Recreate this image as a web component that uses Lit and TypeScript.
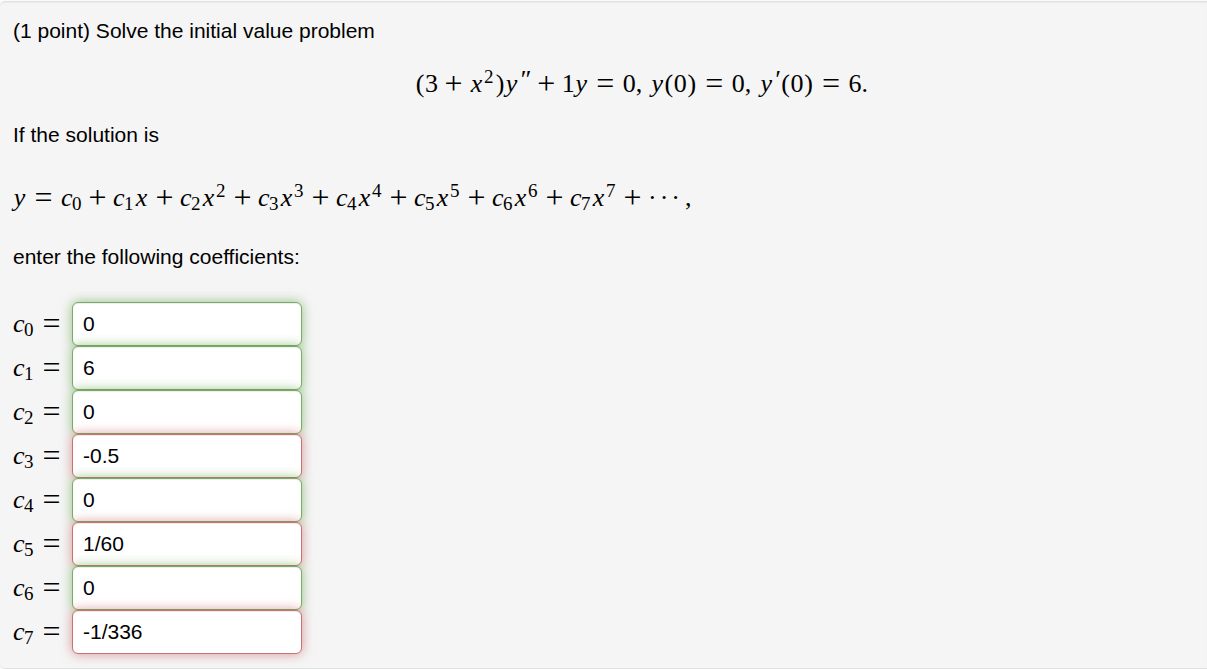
import { LitElement, html, css, nothing } from "lit";
import { customElement } from "lit/decorators.js";

interface Answer {
  index: number;
  value: string;
  correct: boolean;
}

const ANSWERS: Answer[] = [
  { index: 0, value: "0", correct: true },
  { index: 1, value: "6", correct: true },
  { index: 2, value: "0", correct: true },
  { index: 3, value: "-0.5", correct: false },
  { index: 4, value: "0", correct: true },
  { index: 5, value: "1/60", correct: false },
  { index: 6, value: "0", correct: true },
  { index: 7, value: "-1/336", correct: false },
];

const plus = html`<span class="op">+</span>`;
const equals = html`<span class="op rel">=</span>`;
const x = html`<i class="x">x</i>`;
const y = html`<i class="y">y</i>`;
const comma = html`<span class="comma">,</span>`;
const power = (n: number) => html`<sup>${n}</sup>`;
const coefficient = (n: number) => html`<i class="c">c</i><sub>${n}</sub>`;

@customElement("app-root")
export class AppRoot extends LitElement {
  static styles = css`
    :host {
      display: block;
      min-height: 100vh;
      padding-top: 1px;
      box-sizing: border-box;
      background: #fafafa;
      color: #000;
      font: 21px/28px "Liberation Sans", Arial, sans-serif;
    }
    .problem {
      padding: 15px 13px 14px;
      border: 1px solid #e0e2e2;
      border-left: 0;
      border-right: 0;
      border-radius: 5px 0 0 5px;
      background: #f5f5f5;
      box-shadow: inset 0 1px 1px rgba(0, 0, 0, 0.05);
    }
    p {
      margin: 0;
    }
    .math {
      display: flex;
      align-items: baseline;
      font: 26px/32px "Liberation Serif", "Times New Roman", serif;
      white-space: nowrap;
    }
    .display {
      justify-content: center;
      margin: 20px 0 21px;
      padding-left: 76px;
    }
    .series {
      margin: 30px 0 29px;
    }
    .math > * {
      flex: none;
    }
    .op {
      position: relative;
      top: 2px;
      width: 19px;
      margin: 0 6px;
      text-align: center;
      font-size: 32px;
      line-height: 32px;
    }
    .rel {
      margin: 0 8px;
    }
    .x {
      width: 15px;
      text-align: center;
    }
    .y {
      width: 13px;
      text-align: center;
    }
    .c {
      width: 11px;
    }
    .paren {
      width: 10px;
      text-align: center;
    }
    .comma {
      width: 15px;
    }
    .dots {
      width: 32px;
      display: flex;
      justify-content: space-between;
      margin-right: 5px;
    }
    sup,
    sub {
      position: relative;
      font-size: 19px;
      line-height: 20px;
      vertical-align: baseline;
    }
    sup {
      top: -9px;
      width: 11px;
    }
    sub {
      top: 4px;
      width: 10px;
    }
    .prime {
      top: -4px;
      width: auto;
      padding: 0 1px;
      font-size: 26px;
      font-style: italic;
    }
    .answers {
      display: grid;
      margin-top: 31px;
    }
    .answer {
      display: grid;
      grid-template-columns: 59px minmax(0, 230px);
      align-items: center;
    }
    .answer label {
      padding-bottom: 4px;
    }
    .answer .rel {
      margin-right: 0;
    }
    input {
      box-sizing: border-box;
      width: 100%;
      height: 44px;
      margin: 0;
      padding: 0 10px;
      border: 1px solid;
      border-radius: 6px;
      outline: 0;
      background: #fff;
      color: #000;
      font: inherit;
      position: relative;
    }
    .correct {
      border-color: #7aab69;
      box-shadow: inset 0 1px 1px rgba(0, 0, 0, 0.075),
        0 0 12px rgba(81, 153, 51, 0.6);
    }
    .incorrect {
      border-color: #c9736c;
      box-shadow: inset 0 1px 1px rgba(0, 0, 0, 0.075),
        0 0 12px rgba(191, 84, 84, 0.6);
    }
  `;

  render() {
    return html`
      <main class="problem">
        <p>(1 point) Solve the initial value problem</p>
        <div class="math display">
          <span class="paren">(</span><span>3</span>${plus}${x}${power(2)}<span class="paren">)</span>
          ${y}<sup class="prime">″</sup>${plus}<span>1</span>${y}${equals}<span>0</span>${comma}
          ${y}<span class="paren">(</span><span>0</span><span class="paren">)</span>${equals}<span>0</span>${comma}
          ${y}<sup class="prime">′</sup><span class="paren">(</span><span>0</span><span class="paren">)</span>${equals}<span>6.</span>
        </div>
        <p>If the solution is</p>
        <div class="math series">
          ${y}${equals}${ANSWERS.map(
            ({ index }) => html`${coefficient(index)}${index > 0 ? x : nothing}${index > 1 ? power(index) : nothing}${plus}`
          )}<span class="dots"><span>·</span><span>·</span><span>·</span></span><span>,</span>
        </div>
        <p>enter the following coefficients:</p>
        <form class="answers">
          ${ANSWERS.map(
            ({ index, value, correct }) => html`
              <div class="answer">
                <label class="math" for="answer-${index}">${coefficient(index)}${equals}</label>
                <input
                  id="answer-${index}"
                  class=${correct ? "correct" : "incorrect"}
                  type="text"
                  autocomplete="off"
                  .value=${value}
                />
              </div>
            `
          )}
        </form>
      </main>
    `;
  }
}
